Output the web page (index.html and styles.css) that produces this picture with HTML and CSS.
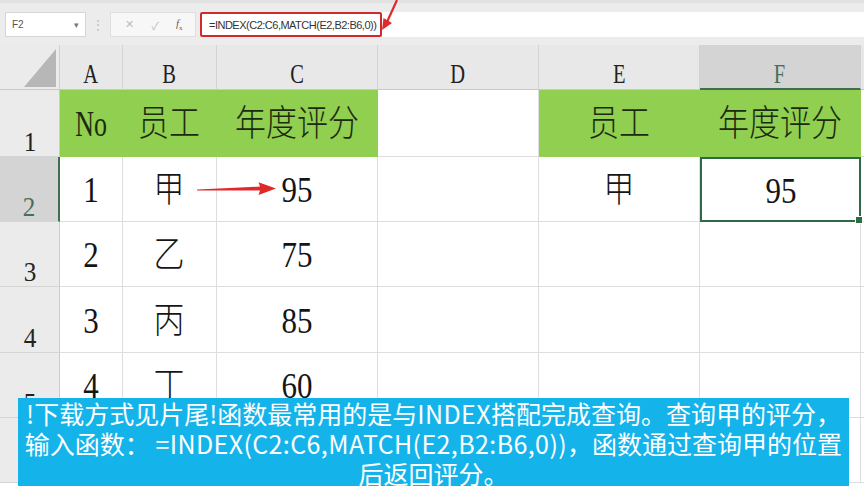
FILE: index.html
```html
<!DOCTYPE html>
<html lang="zh">
<head>
<meta charset="utf-8">
<title>INDEX MATCH</title>
<link rel="stylesheet" href="styles.css">
</head>
<body>
<div class="topbar">
  <div class="namebox"><span class="nb-text">F2</span><span class="caret">▾</span></div>
  <div class="dots">⋮</div>
  <div class="iconbox">
    <span class="ic">✕</span>
    <span class="ic">✓</span>
    <span class="fx"><i>f</i><sub>x</sub></span>
  </div>
  <div class="formula">
    <span class="ftext">=INDEX(C2:C6,MATCH(E2,B2:B6,0))</span>
  </div>
</div>

<div class="sheet">
  <div class="corner"><div class="tri"></div></div>
  <div class="ch"><span>A</span></div>
  <div class="ch"><span>B</span></div>
  <div class="ch"><span>C</span></div>
  <div class="ch"><span>D</span></div>
  <div class="ch"><span>E</span></div>
  <div class="ch sel"><span>F</span></div>
  <div class="ch"></div>

  <div class="rh"><span>1</span></div>
  <div class="c g"><span class="narrow">No</span></div>
  <div class="c g"><span>员工</span></div>
  <div class="c g"><span>年度评分</span></div>
  <div class="c"></div>
  <div class="c g"><span>员工</span></div>
  <div class="c g"><span>年度评分</span></div>
  <div class="c"></div>

  <div class="rh sel"><span>2</span></div>
  <div class="c"><span>1</span></div>
  <div class="c"><span>甲</span></div>
  <div class="c"><span>95</span></div>
  <div class="c"></div>
  <div class="c"><span>甲</span></div>
  <div class="c active"><span>95</span></div>
  <div class="c"></div>

  <div class="rh"><span>3</span></div>
  <div class="c"><span>2</span></div>
  <div class="c"><span>乙</span></div>
  <div class="c"><span>75</span></div>
  <div class="c"></div>
  <div class="c"></div>
  <div class="c"></div>
  <div class="c"></div>

  <div class="rh"><span>4</span></div>
  <div class="c"><span>3</span></div>
  <div class="c"><span>丙</span></div>
  <div class="c"><span>85</span></div>
  <div class="c"></div>
  <div class="c"></div>
  <div class="c"></div>
  <div class="c"></div>

  <div class="rh"><span>5</span></div>
  <div class="c"><span>4</span></div>
  <div class="c"><span>丁</span></div>
  <div class="c"><span>60</span></div>
  <div class="c"></div>
  <div class="c"></div>
  <div class="c"></div>
  <div class="c"></div>

  <div class="rh"></div>
  <div class="c"></div>
  <div class="c"></div>
  <div class="c"></div>
  <div class="c"></div>
  <div class="c"></div>
  <div class="c"></div>
  <div class="c"></div>
</div>

<svg class="marks" width="864" height="486" viewBox="0 0 864 486">
  <line x1="397" y1="0" x2="387" y2="22" stroke="#dd2a2a" stroke-width="2.2"/>
  <polygon points="382,30 383.5,18 392,23" fill="#dd2a2a"/>
  <polygon points="197,189.6 260,186.6 258.5,182.2 276,188.4 258.5,195 260,190.6 197,190.6" fill="#e02a2a"/>
</svg>

<div class="cap">
  <div>!下载方式见片尾!函数最常用的是与<span class="lat">INDEX</span>搭配完成查询。查询甲的评分，</div>
  <div>输入函数： <span class="lat">=INDEX(C2:C6,MATCH(E2,B2:B6,0))</span>，函数通过查询甲的位置</div>
  <div>后返回评分。</div>
</div>
</body>
</html>
```

FILE: styles.css
```css
html, body {
  margin: 0;
  padding: 0;
}
body {
  width: 864px;
  height: 486px;
  overflow: hidden;
  background: #ffffff;
  position: relative;
  font-family: "Liberation Serif", "Noto Sans CJK SC", serif;
}

/* formula bar */
.topbar {
  height: 45px;
  box-sizing: border-box;
  background: #ececec;
  border-top: 3px solid #e2e2e2;
  padding-top: 9px;
  padding-bottom: 8px;
  display: flex;
  align-items: stretch;
  font-family: "Liberation Sans", "Noto Sans CJK SC", sans-serif;
}
.namebox {
  margin-left: 5px;
  width: 81px;
  box-sizing: border-box;
  background: #ffffff;
  border: 1px solid #d6d6d6;
  display: flex;
  align-items: center;
  justify-content: space-between;
  padding: 0 6px 0 6px;
}
.nb-text {
  font-size: 10px;
  color: #555;
}
.caret {
  font-size: 9px;
  color: #777;
}
.dots {
  width: 24px;
  display: flex;
  align-items: center;
  justify-content: center;
  color: #c4c4c4;
  font-size: 14px;
}
.iconbox {
  width: 86px;
  box-sizing: border-box;
  background: #f7f7f7;
  border: 1px solid #dedede;
  display: flex;
  align-items: center;
  justify-content: space-around;
  padding: 0 4px 0 6px;
}
.ic {
  font-size: 11px;
  color: #bdbdbd;
}
.fx {
  font-family: "Liberation Serif", serif;
  font-size: 11px;
  color: #666;
}
.fx sub {
  font-size: 7px;
}
.formula {
  flex: 1;
  margin-left: 4px;
  background: #ffffff;
  display: flex;
  align-items: stretch;
}
.ftext {
  width: 182px;
  box-sizing: border-box;
  border: 2px solid #cf2b2b;
  border-radius: 2px;
  display: flex;
  align-items: center;
  padding-left: 7px;
  font-size: 11px;
  letter-spacing: -0.5px;
  color: #333;
  white-space: nowrap;
}

/* sheet grid */
.sheet {
  display: grid;
  grid-template-columns: 60px 63px 94px 161px 161px 161px 161px 161px;
  grid-template-rows: 45px 67px 65px 65px 66px 65px 65px;
  width: 864px;
  overflow: hidden;
}
.corner {
  background: #ebebeb;
  border-right: 1px solid #d0d0d0;
  border-bottom: 1px solid #c9c9c9;
  display: flex;
  align-items: flex-end;
  justify-content: flex-end;
  padding: 0 3px 2px 0;
}
.tri {
  width: 32px;
  height: 38px;
  background: #b7b7b7;
  clip-path: polygon(100% 0, 100% 100%, 0 100%);
}
.ch {
  background: #e8e8e8;
  border-right: 1px solid #d3d3d3;
  border-bottom: 1px solid #c9c9c9;
  display: flex;
  align-items: flex-end;
  justify-content: center;
  font-size: 27px;
  line-height: 1;
  padding-bottom: 1px;
  color: #222;
}
.ch span {
  display: inline-block;
  transform: scaleX(0.76);
}
.ch.sel {
  background: #d4d4d4;
  border-bottom: 2px solid #3f6e50;
  padding-bottom: 0;
  color: #4a6d5a;
}
.rh {
  background: #ebebeb;
  border-right: 1px solid #cbcbcb;
  border-bottom: 1px solid #d5d5d5;
  display: flex;
  align-items: flex-end;
  justify-content: center;
  font-size: 28px;
  line-height: 1;
  color: #222;
}
.rh span {
  display: inline-block;
  transform: scaleX(0.9);
}
.rh.sel {
  background: #d4d4d4;
  border-right: 2px solid #3f6e50;
  color: #4a6d5a;
}
.c {
  border-right: 1px solid #dedede;
  border-bottom: 1px solid #dedede;
  display: flex;
  align-items: center;
  justify-content: center;
  font-size: 36px;
  line-height: 1;
  color: #151515;
  padding-top: 2px;
  box-sizing: border-box;
}
.c span {
  display: inline-block;
  transform: scaleX(0.86);
  font-weight: 300;
}
.c span.narrow {
  transform: scaleX(0.72);
  font-weight: 400;
}
.c.g {
  background: #90cf4f;
  border-color: #90cf4f;
  color: #1d2a12;
}
.c.active {
  border: 2px solid #2f6a45;
  position: relative;
}
.c.active::after {
  content: "";
  position: absolute;
  right: -4px;
  bottom: -4px;
  width: 6px;
  height: 6px;
  background: #2f6a45;
  border: 1px solid #ffffff;
}

/* annotation marks */
.marks {
  position: absolute;
  left: 0;
  top: 0;
  pointer-events: none;
}

/* subtitle caption */
.cap {
  position: absolute;
  left: 18px;
  top: 398px;
  width: 831px;
  height: 92px;
  background: #14b4eb;
  color: #ffffff;
  font-family: "Noto Sans CJK SC", "Noto Sans", sans-serif;
  font-size: 25px;
  line-height: 30px;
  text-align: center;
  padding-top: 0;
  box-sizing: border-box;
}
.cap div {
  white-space: nowrap;
}
.cap .lat {
  letter-spacing: 0.4px;
}
```
